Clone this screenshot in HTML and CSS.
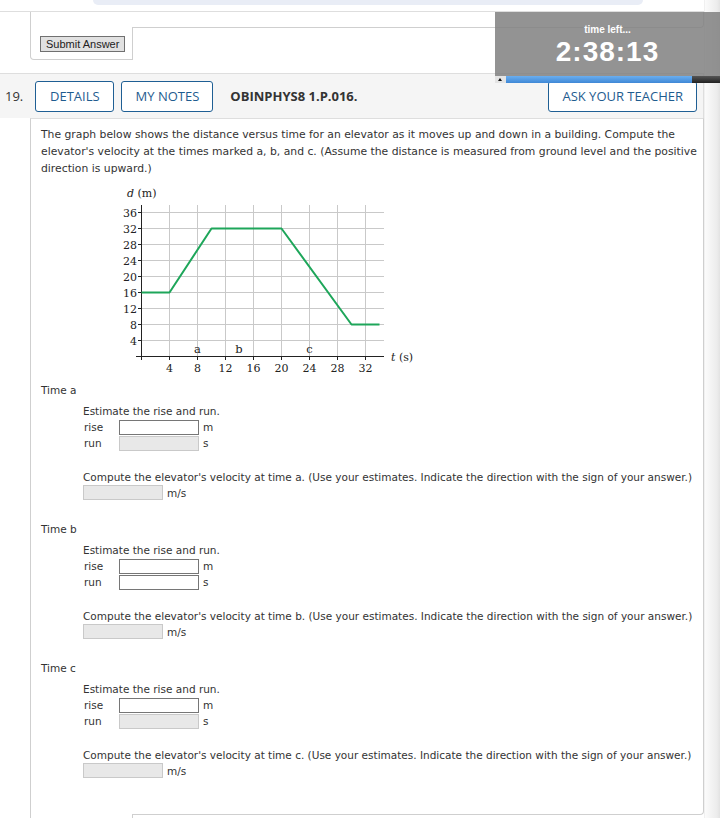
FILE: index.html
```html
<!DOCTYPE html>
<html lang="en">
<head>
<meta charset="utf-8">
<title>OBINPHYS8 1.P.016</title>
<link rel="stylesheet" href="styles.css">
</head>
<body>
<div class="page">
  <div class="topbar"><div class="pill"></div></div>
  <div class="prev">
    <div class="prev-main"></div>
    <div class="prev-tab"><button class="submit" type="button">Submit Answer</button></div>
  </div>
  <div class="qhead">
    <span class="qnum">19.</span>
    <span class="btn">DETAILS</span>
    <span class="btn notes">MY NOTES</span>
    <span class="qid">OBINPHYS8 1.P.016.</span>
    <span class="btn ask">ASK YOUR TEACHER</span>
  </div>
  <div class="qbox">
    <p class="intro">The graph below shows the distance versus time for an elevator as it moves up and down in a building. Compute the elevator's velocity at the times marked a, b, and c. (Assume the distance is measured from ground level and the positive direction is upward.)</p>
    <svg class="graph" width="320" height="200" viewBox="0 0 320 200">
      <g class="grid">
        <line x1="41.5" y1="160.5" x2="284" y2="160.5"/>
        <line x1="41.5" y1="144.5" x2="284" y2="144.5"/>
        <line x1="41.5" y1="128.5" x2="284" y2="128.5"/>
        <line x1="41.5" y1="112.5" x2="284" y2="112.5"/>
        <line x1="41.5" y1="96.5" x2="284" y2="96.5"/>
        <line x1="41.5" y1="80.5" x2="284" y2="80.5"/>
        <line x1="41.5" y1="64.5" x2="284" y2="64.5"/>
        <line x1="41.5" y1="48.5" x2="284" y2="48.5"/>
        <line x1="41.5" y1="32.5" x2="284" y2="32.5"/>
        <line x1="69.5" y1="25" x2="69.5" y2="176.5"/>
        <line x1="97.5" y1="25" x2="97.5" y2="176.5"/>
        <line x1="125.5" y1="25" x2="125.5" y2="176.5"/>
        <line x1="153.5" y1="25" x2="153.5" y2="176.5"/>
        <line x1="181.5" y1="25" x2="181.5" y2="176.5"/>
        <line x1="209.5" y1="25" x2="209.5" y2="176.5"/>
        <line x1="237.5" y1="25" x2="237.5" y2="176.5"/>
        <line x1="265.5" y1="25" x2="265.5" y2="176.5"/>
      </g>
      <g class="axis">
        <line x1="41.5" y1="25" x2="41.5" y2="180"/>
        <line x1="36" y1="176.5" x2="284" y2="176.5"/>
        <path d="M38 160.5H41.5M38 144.5H41.5M38 128.5H41.5M38 112.5H41.5M38 96.5H41.5M38 80.5H41.5M38 64.5H41.5M38 48.5H41.5M38 32.5H41.5"/>
        <path d="M69.5 176.5V180M97.5 176.5V180M125.5 176.5V180M153.5 176.5V180M181.5 176.5V180M209.5 176.5V180M237.5 176.5V180M265.5 176.5V180"/>
      </g>
      <polyline class="curve" points="41.5,112.5 69.5,112.5 111.5,48.5 181.5,48.5 251.5,144.5 279.5,144.5"/>
      <g class="ylab">
        <text x="37" y="36.5">36</text>
        <text x="37" y="52.5">32</text>
        <text x="37" y="68.5">28</text>
        <text x="37" y="84.5">24</text>
        <text x="37" y="100.5">20</text>
        <text x="37" y="116.5">16</text>
        <text x="37" y="132.5">12</text>
        <text x="37" y="148.5">8</text>
        <text x="37" y="164.5">4</text>
      </g>
      <g class="xlab">
        <text x="69.5" y="192">4</text>
        <text x="97.5" y="192">8</text>
        <text x="125.5" y="192">12</text>
        <text x="153.5" y="192">16</text>
        <text x="181.5" y="192">20</text>
        <text x="209.5" y="192">24</text>
        <text x="237.5" y="192">28</text>
        <text x="265.5" y="192">32</text>
      </g>
      <g class="xlab marks">
        <text x="97.5" y="173">a</text>
        <text x="139" y="173">b</text>
        <text x="209.5" y="173">c</text>
      </g>
      <text class="axtitle" x="27" y="17"><tspan class="it">d</tspan> (m)</text>
      <text class="axtitle" x="291" y="181"><tspan class="it">t</tspan> (s)</text>
    </svg>

    <div class="part">
      <div class="time">Time a</div>
      <div class="sub">
        <div class="line">Estimate the rise and run.</div>
        <div class="row"><span class="lbl">rise</span><span class="inp"></span><span class="unit">m</span></div>
        <div class="row"><span class="lbl">run</span><span class="inp off"></span><span class="unit">s</span></div>
        <div class="line compute">Compute the elevator's velocity at time a. (Use your estimates. Indicate the direction with the sign of your answer.)</div>
        <div class="row vel"><span class="inp off"></span><span class="unit">m/s</span></div>
      </div>
    </div>

    <div class="part">
      <div class="time">Time b</div>
      <div class="sub">
        <div class="line">Estimate the rise and run.</div>
        <div class="row"><span class="lbl">rise</span><span class="inp"></span><span class="unit">m</span></div>
        <div class="row"><span class="lbl">run</span><span class="inp"></span><span class="unit">s</span></div>
        <div class="line compute">Compute the elevator's velocity at time b. (Use your estimates. Indicate the direction with the sign of your answer.)</div>
        <div class="row vel"><span class="inp off"></span><span class="unit">m/s</span></div>
      </div>
    </div>

    <div class="part">
      <div class="time">Time c</div>
      <div class="sub">
        <div class="line">Estimate the rise and run.</div>
        <div class="row"><span class="lbl">rise</span><span class="inp"></span><span class="unit">m</span></div>
        <div class="row"><span class="lbl">run</span><span class="inp off"></span><span class="unit">s</span></div>
        <div class="line compute">Compute the elevator's velocity at time c. (Use your estimates. Indicate the direction with the sign of your answer.)</div>
        <div class="row vel"><span class="inp off"></span><span class="unit">m/s</span></div>
      </div>
    </div>
  </div>
  <div class="next-tab"></div>
</div>
<div class="strip"></div>

<div class="timer">
  <div class="tl">time left...</div>
  <div class="clock">2:38:13</div>
  <div class="tbar"><span class="tbtn"></span><span class="tprog"></span><span class="trest"></span></div>
</div>
</body>
</html>
```

FILE: styles.css
```css
html, body {
  margin: 0;
  padding: 0;
  background: #fff;
}
body {
  display: flex;
  align-items: stretch;
  min-height: 818px;
  overflow: hidden;
  font-family: "DejaVu Sans", Verdana, sans-serif;
  color: #333;
}
.page {
  width: 704px;
  flex: none;
}
.strip {
  flex: 1;
  background: linear-gradient(to right, #fbfbfb, #ececec 80%, #e2e2e2);
  border-left: 1px solid #f0f0f0;
}

/* top */
.topbar {
  height: 11px;
  border-bottom: 1px solid #dedede;
}
.pill {
  margin-left: 93px;
  width: 550px;
  height: 5px;
  background: #e9edf6;
  border-radius: 0 0 9px 9px;
}
.prev-main {
  margin-left: 30px;
  height: 15px;
  border: 1px solid #cfcfcf;
  border-top: none;
  border-radius: 0 0 4px 0;
}
.prev-tab {
  margin-left: 30px;
  margin-top: -1px;
  padding: 9px 0 0 9px;
  box-sizing: border-box;
  width: 103px;
  height: 33px;
  background: #fff;
  border: 1px solid #cfcfcf;
  border-top: none;
  border-radius: 0 0 0 4px;
}
.submit {
  display: block;
  margin: 0;
  height: 16px;
  padding: 0 5px;
  font-family: "Liberation Sans", Arial, sans-serif;
  font-size: 11px;
  line-height: 14px;
  color: #222;
  background: #e1e1e1;
  border: 1px solid #707070;
  border-radius: 0;
}

/* question header */
.qhead {
  margin-top: 13px;
  height: 45px;
  box-sizing: border-box;
  padding: 7px 6px 7px 5px;
  background: #f5f5f5;
  border-top: 1px solid #dedede;
  border-right: 1px solid #dedede;
  display: flex;
  align-items: center;
  font-family: "Open Sans", sans-serif;
  font-size: 13px;
}
.qnum {
  width: 30px;
  color: #333;
}
.btn {
  height: 31px;
  box-sizing: border-box;
  display: flex;
  align-items: center;
  padding: 0 13px 0 14px;
  border: 1px solid #1f5f94;
  border-radius: 3px;
  color: #1f5c8f;
  background: #fff;
  font-size: 13px;
}
.notes {
  margin-left: 7px;
}
.qid {
  margin-left: 17px;
  font-weight: 700;
  color: #333;
}
.ask {
  margin-left: auto;
  padding: 0 13px;
}

/* question box */
.qbox {
  margin-left: 30px;
  border: 1px solid #cfcfcf;
  border-top-color: #dedede;
  border-radius: 0 0 4px 0;
  padding: 7px 0 36px 0;
}
.intro {
  margin: 0;
  padding: 0 4px 0 10px;
  font-size: 10.8px;
  line-height: 17px;
  color: #333;
}
.graph {
  display: block;
  margin: 3px 0 0 69px;
}
.grid line {
  stroke: #c9c9c9;
  stroke-width: 1;
}
.axis line, .axis path {
  stroke: #222;
  stroke-width: 1;
  fill: none;
}
.curve {
  fill: none;
  stroke: #1ea65a;
  stroke-width: 2;
  stroke-linejoin: round;
}
.ylab text, .xlab text, .axtitle {
  font-family: "DejaVu Serif", "Liberation Serif", serif;
  font-size: 11px;
  fill: #222;
}
.ylab text {
  text-anchor: end;
}
.xlab text {
  text-anchor: middle;
}
.marks text {
  font-size: 11.5px;
}
.it {
  font-style: italic;
}

.part {
  margin-top: 2px;
  margin-bottom: 21px;
  padding-left: 10px;
  font-size: 10.5px;
  color: #333;
}
.part + .part {
  margin-top: 0;
}
.part:last-child {
  margin-bottom: 0;
}
.time {
  line-height: 16px;
}
.sub {
  margin-left: 42px;
  padding-top: 5px;
}
.line {
  line-height: 16px;
  white-space: nowrap;
}
.compute {
  margin-top: 18px;
}
.row {
  display: flex;
  align-items: center;
  height: 16px;
}
.row.vel {
  height: 15px;
}
.lbl {
  width: 36px;
  padding-left: 1px;
  box-sizing: border-box;
}
.inp {
  width: 80px;
  height: 15px;
  box-sizing: border-box;
  background: #fff;
  border: 1px solid #767676;
}
.inp.off {
  background: #e8e8e8;
  border-color: #c9c9c9;
}
.unit {
  margin-left: 4px;
}
.next-tab {
  margin-left: 30px;
  margin-top: -1px;
  width: 103px;
  height: 20px;
  box-sizing: border-box;
  background: #fff;
  border-left: 1px solid #cfcfcf;
  border-right: 1px solid #cfcfcf;
}

/* timer overlay */
.timer {
  position: absolute;
  left: 495px;
  top: 12px;
  width: 225px;
  height: 71px;
  background: rgba(128, 128, 128, 0.85);
  color: #fff;
  font-family: "Liberation Sans", Arial, sans-serif;
  font-weight: 700;
  text-align: center;
  display: flex;
  flex-direction: column;
}
.tl {
  margin-top: 12px;
  font-size: 10px;
  line-height: 12px;
}
.clock {
  margin-top: 1px;
  font-size: 28px;
  line-height: 30px;
  letter-spacing: 1px;
}
.tbar {
  margin-top: auto;
  height: 7px;
  display: flex;
}
.tbtn {
  width: 11px;
  background: #e4e4e4;
  position: relative;
}
.tbtn::after {
  content: "";
  position: absolute;
  left: 3px;
  top: 2px;
  border-left: 2.5px solid transparent;
  border-right: 2.5px solid transparent;
  border-bottom: 3px solid #111;
}
.tprog {
  width: 186px;
  background: linear-gradient(#6aaef0, #3f88d6);
}
.trest {
  flex: 1;
  background: linear-gradient(#555, #222);
}
```
